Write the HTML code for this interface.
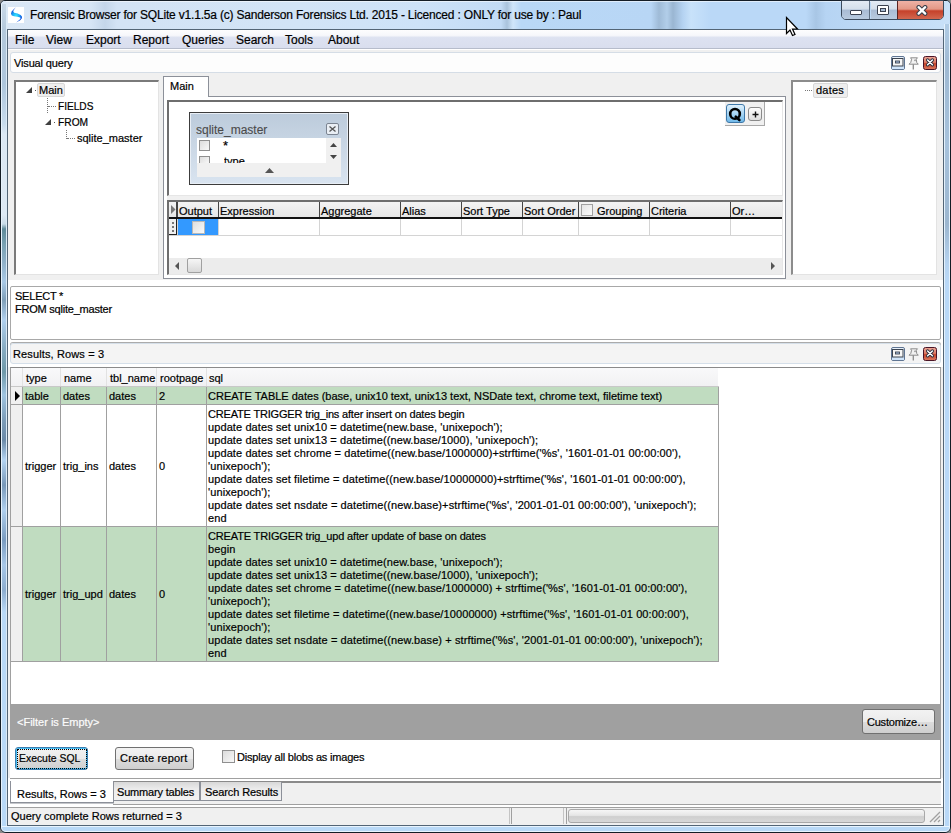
<!DOCTYPE html>
<html><head><meta charset="utf-8">
<style>
*{margin:0;padding:0;box-sizing:border-box}
html,body{width:951px;height:833px;overflow:hidden;background:#8a8a8a}
body{position:relative;font-family:"Liberation Sans",sans-serif;font-size:11px;color:#000}
.a{position:absolute}
.t{position:absolute;white-space:pre;line-height:13px;-webkit-text-stroke:0.2px currentColor}
#frame{left:0;top:0;width:951px;height:833px;border-radius:5px 5px 6px 6px;background:#b9d7f4;border:1px solid #141d26}
#glass{left:1px;top:1px;width:949px;height:28px;border-radius:4px 4px 0 0;background:linear-gradient(90deg,#dbe8f6 0px,#d6e5f5 90px,#c4d6ea 104px,#d3e3f5 116px,#d2e4f6 300px,#cde2f8 420px,#c2dbf5 500px,#a9c3dc 506px,#d0e6fa 512px,#b9d8f6 520px,#b8d6f5 650px,#9fbbd7 658px,#b2cee9 666px,#9ab6d2 672px,#b5d3f2 682px,#c8e2fa 690px,#bad8f7 710px,#bad8f7 805px,#a8c6e5 815px,#b6d4f3 825px,#c9e1f8 949px)}
#client{left:7px;top:29px;width:937px;height:797px;border:1px solid #536576;background:#f0f0f0}
#menubar{left:8px;top:30px;width:935px;height:19px;background:linear-gradient(#fdfdfe 0,#f6f7fb 30%,#dde2f1 42%,#d9deee 100%);border-bottom:1px solid #b6bccb;box-shadow:0 1px 0 #fff}
.menu{font-size:12px;top:34px;line-height:13px}
</style></head><body>
<div id="frame" class="a"></div>
<div id="glass" class="a"></div>
<div class="a" style="left:6px;top:1px;width:939px;height:1px;background:rgba(255,255,255,0.55)"></div>
<!-- title icon -->
<div class="a" style="left:8px;top:7px;width:16px;height:16px;background:#fff"></div>
<svg class="a" style="left:8px;top:7px" width="16" height="16" viewBox="0 0 16 16">
 <defs><radialGradient id="ig" cx="8" cy="8.5" r="6" gradientUnits="userSpaceOnUse"><stop offset="0" stop-color="#36e6ff"/><stop offset="0.55" stop-color="#1aa8f4"/><stop offset="1" stop-color="#0b4ee0"/></radialGradient></defs>
 <path d="M7.8 0.3 L5.5 2.5 L3.6 4.6 L3 6.8 L3.8 8.4 L6 9.2 L9.5 9.8 L12.2 10.4 L12.6 11.2 L11.5 12.8 L8.2 15.6 L12.2 13.2 L13.9 11.2 L13.9 9.6 L12.6 8 L9.6 6.6 L6.2 5.8 L5.3 4.6 L5.6 3.2 Z" fill="url(#ig)"/>
</svg>
<div class="t" style="left:30px;top:9px;font-size:12px;letter-spacing:-0.19px;line-height:13px">Forensic Browser for SQLite v1.1.5a (c) Sanderson Forensics Ltd. 2015 - Licenced : ONLY for use by : Paul</div>
<!-- caption buttons -->
<div class="a" style="left:841px;top:0px;width:103px;height:20px;border:1px solid #3b4a5c;border-radius:0 0 5px 5px;overflow:hidden">
 <div class="a" style="left:0;top:0;width:28px;height:18px;background:linear-gradient(#e3ebf4 0,#d4dfeb 45%,#a9bcd4 50%,#b8cadf 100%);border-right:1px solid #5f6f82"></div>
 <div class="a" style="left:29px;top:0;width:26px;height:18px;background:linear-gradient(#e3ebf4 0,#d4dfeb 45%,#a9bcd4 50%,#b8cadf 100%)"></div>
 <div class="a" style="left:55px;top:0;width:47px;height:18px;background:linear-gradient(#eeb2a6 0,#e39886 45%,#c6412a 55%,#d2674f 100%);border-left:1px solid #5a2320"></div>
 <div class="a" style="left:8px;top:9px;width:12px;height:5px;background:#fff;border:1px solid #3b4250;border-radius:1px"></div>
 <div class="a" style="left:35px;top:4px;width:12px;height:10px;background:#fff;border:1px solid #3b4250;border-radius:1px"><div class="a" style="left:2px;top:2px;width:6px;height:4px;background:#a9bcd4;border:1px solid #3b4250"></div></div>
 <svg class="a" style="left:74px;top:4px" width="12" height="11" viewBox="0 0 12 11"><path d="M2.6 2.2 L9.2 8.6 M9.2 2.2 L2.6 8.6" stroke="#3b3f4a" stroke-width="4.4" stroke-linecap="round"/><path d="M2.6 2.2 L9.2 8.6 M9.2 2.2 L2.6 8.6" stroke="#fff" stroke-width="2.3" stroke-linecap="round"/></svg>
</div>
<div id="client" class="a"></div>
<!-- left frame -->
<div class="a" style="left:1px;top:4px;width:6px;height:823px;background:#e6f2fc"></div>
<div class="a" style="left:2px;top:4px;width:4px;height:823px;background:linear-gradient(#c9d9e8 0px,#b4c9dc 26px,#aec6dc 80px,#c8dbec 120px,#dbe8f4 130px,#dde9f4 211px,#c9dbe8 220px,#5f8a9a 225px,#7aa2b4 241px,#8fb0c8 258px,#a9c9e6 278px,#7f9fb8 296px,#b0d0ee 316px,#86aac0 346px,#6e98a8 368px,#a0c4e0 391px,#7c9cb8 416px,#6b8aa8 436px,#b4d4f2 456px,#7898b8 481px,#b0d0ee 506px,#7a9cc0 536px,#a8c8e8 561px,#8cacce 586px,#b9d9f7 608px,#b9d9f7 823px)"></div>
<div class="a" style="left:6px;top:4px;width:1px;height:823px;background:#dbeaf6"></div>
<!-- right frame -->
<div class="a" style="left:944px;top:24px;width:6px;height:803px;background:#e4f1fc"></div>
<div class="a" style="left:945px;top:24px;width:4px;height:803px;background:linear-gradient(#b2cde6 0,#9fb9d2 40px,#a7c2dc 120px,#9cb6cf 200px,#b6d3f0 240px,#b9d8f7 260px,#b9d8f7 803px)"></div>
<!-- bottom frame -->
<div class="a" style="left:1px;top:826px;width:949px;height:6px;background:#e8f4fe;border-radius:0 0 5px 5px"></div>
<div class="a" style="left:2px;top:827px;width:947px;height:4px;background:#b9d9f7;border-radius:0 0 4px 4px"></div>
<div id="menubar" class="a"></div>
<div class="t menu" style="left:15px">File</div>
<div class="t menu" style="left:46px">View</div>
<div class="t menu" style="left:86px">Export</div>
<div class="t menu" style="left:133px">Report</div>
<div class="t menu" style="left:182px">Queries</div>
<div class="t menu" style="left:236px">Search</div>
<div class="t menu" style="left:285px">Tools</div>
<div class="t menu" style="left:328px">About</div>

<!-- Visual query header -->
<div class="a" style="left:10px;top:52px;width:931px;height:21px;background:#fdfdfd;border:1px solid #d5dde6;border-radius:3px"></div>
<div class="t" style="left:14px;top:57px;letter-spacing:-0.15px">Visual query</div>
<!-- header icons -->
<svg class="a" style="left:891px;top:56px" width="14" height="14" viewBox="0 0 14 14"><rect x="0.5" y="0.5" width="13" height="13" rx="1.5" fill="#e8f0f9" stroke="#5f7593"/><rect x="1" y="10" width="12" height="3" fill="#cfe4fa"/><rect x="1.5" y="2.5" width="10.5" height="7.5" fill="#f6f6f6" stroke="#3c4450"/><rect x="4.5" y="5" width="4" height="2" fill="#a9c4e6" stroke="#3c4450" stroke-width="0.9"/></svg>
<svg class="a" style="left:908px;top:57px" width="11" height="13" viewBox="0 0 11 13"><path d="M2.5 0.8 H9.5 L8.2 2.2 L8.8 5.6 L10.3 7.2 H1 L2.8 5.4 L3.6 2.2 Z" fill="#f2f2f2" stroke="#8c8c8c" stroke-width="1"/><circle cx="7" cy="3.3" r="0.9" fill="#9a9a9a"/><path d="M5.3 7.2 V12.5" stroke="#8c8c8c" stroke-width="1.3"/></svg>
<svg class="a" style="left:923px;top:56px" width="14" height="14" viewBox="0 0 14 14"><defs><linearGradient id="cg56" x1="0" y1="0" x2="0" y2="1"><stop offset="0" stop-color="#eba697"/><stop offset="0.45" stop-color="#dc7a64"/><stop offset="0.55" stop-color="#c4432a"/><stop offset="1" stop-color="#dd7a60"/></linearGradient></defs><rect x="0.5" y="0.5" width="13" height="13" rx="2" fill="url(#cg56)" stroke="#4a1426"/><path d="M4.6 4 L9.4 8.8 M9.4 4 L4.6 8.8" stroke="#2b3140" stroke-width="3.2" stroke-linecap="round"/><path d="M4.6 4 L9.4 8.8 M9.4 4 L4.6 8.8" stroke="#fff" stroke-width="1.4" stroke-linecap="round"/></svg>

<!-- left tree -->
<div class="a" style="left:14px;top:80px;width:145px;height:195px;background:#fff;border-top:2px solid #7a7a7a;border-left:2px solid #7a7a7a;border-right:1px solid #e3e3e3;border-bottom:1px solid #e3e3e3"></div>
<svg class="a" style="left:26px;top:87px" width="7" height="6"><path d="M6 0 V6 H0 Z" fill="#404040"/></svg>
<div class="a" style="left:35px;top:90px;width:1px;height:1px;background:#555"></div>
<div class="a" style="left:37px;top:83px;width:28px;height:14px;background:#eeeeee;border:1px solid #d8d8d8;border-radius:2px"></div>
<div class="t" style="left:39px;top:84px">Main</div>
<div class="a" style="left:47px;top:98px;width:1px;height:15px;border-left:1px dotted #777"></div>
<div class="a" style="left:48px;top:106px;width:8px;height:1px;border-top:1px dotted #777"></div>
<div class="t" style="left:58px;top:100px;transform:scaleX(0.92);transform-origin:0 0">FIELDS</div>
<svg class="a" style="left:45px;top:119px" width="7" height="6"><path d="M6 0 V6 H0 Z" fill="#404040"/></svg>
<div class="a" style="left:54px;top:122px;width:1px;height:1px;background:#555"></div>
<div class="t" style="left:58px;top:116px;transform:scaleX(0.93);transform-origin:0 0">FROM</div>
<div class="a" style="left:66px;top:130px;width:1px;height:9px;border-left:1px dotted #777"></div>
<div class="a" style="left:67px;top:138px;width:8px;height:1px;border-top:1px dotted #777"></div>
<div class="t" style="left:77px;top:132px">sqlite_master</div>

<!-- tab control -->
<div class="a" style="left:163px;top:96px;width:623px;height:183px;background:#fff;border:1px solid #8c9099"></div>
<div class="a" style="left:163px;top:76px;width:46px;height:21px;background:#fff;border:1px solid #8c9099;border-bottom:none"></div>
<div class="t" style="left:170px;top:80px">Main</div>
<!-- canvas -->
<div class="a" style="left:167px;top:100px;width:616px;height:96px;background:#fff;border-top:2px solid #6e6e6e;border-left:2px solid #6e6e6e;border-right:1px solid #e6e6e6;border-bottom:1px solid #e6e6e6"></div>
<div class="a" style="left:167px;top:196px;width:616px;height:4px;background:#f0f0f0"></div>
<!-- table box -->
<div class="a" style="left:189px;top:112px;width:160px;height:73px;border:1px solid #3c3c3c;background:linear-gradient(#bccbdb,#d9e4f0)"></div>
<div class="a" style="left:190px;top:113px;width:158px;height:71px;border:1px solid #e8eef5"></div>
<div class="t" style="left:196px;top:124px;color:#4a4a4a;font-size:12px;-webkit-text-stroke:0.1px #4a4a4a">sqlite_master</div>
<div class="a" style="left:326px;top:123px;width:13px;height:12px;border:1px solid #7b8491;border-radius:2px;background:#e9eef4"></div>
<svg class="a" style="left:329px;top:126px" width="7" height="6"><path d="M0.5 0.5 L6.5 5.5 M6.5 0.5 L0.5 5.5" stroke="#555" stroke-width="1.3"/></svg>
<div class="a" style="left:197px;top:138px;width:144px;height:25px;background:#fff"></div>
<div class="a" style="left:326px;top:138px;width:15px;height:25px;background:#f0f0f0"></div>
<svg class="a" style="left:330px;top:143px" width="7" height="4"><path d="M0 4 L3.5 0 L7 4Z" fill="#444"/></svg>
<svg class="a" style="left:330px;top:155px" width="7" height="4"><path d="M0 0 L3.5 4 L7 0Z" fill="#444"/></svg>
<div class="a" style="left:199px;top:140px;width:11px;height:11px;border:1px solid #8f8f8f;background:linear-gradient(135deg,#dcdcdc,#f8f8f8)"></div>
<div class="a" style="left:199px;top:156px;width:11px;height:7px;border:1px solid #8f8f8f;border-bottom:none;background:linear-gradient(135deg,#dcdcdc,#f8f8f8)"></div>
<div class="t" style="left:223px;top:139px;font-size:13px">*</div>
<div class="a" style="left:224px;top:154px;width:30px;height:9px;overflow:hidden"><div class="t" style="left:0;top:1px">type</div></div>
<div class="a" style="left:197px;top:163px;width:144px;height:14px;background:#f0f0f0"></div>
<svg class="a" style="left:265px;top:168px" width="9" height="5"><path d="M0 5 L4.5 0 L9 5Z" fill="#555"/></svg>
<!-- Q toolbar -->
<div class="a" style="left:725px;top:102px;width:40px;height:24px;background:#f0f0f0;border-right:1px solid #a8a8a8;border-bottom:1px solid #a8a8a8"></div>
<div class="a" style="left:726px;top:104px;width:19px;height:19px;border:1px solid #3d77a8;border-radius:3px;background:linear-gradient(#dff0fb,#a9d6f4 50%,#70b8e8)"></div>
<svg class="a" style="left:727px;top:107px" width="16" height="16" viewBox="0 0 16 16"><ellipse cx="8" cy="6.9" rx="4.8" ry="4.9" fill="none" stroke="#000" stroke-width="2.6"/><path d="M8.8 9.6 L12.4 13" stroke="#000" stroke-width="2.6" stroke-linecap="round"/></svg>
<div class="a" style="left:748px;top:107px;width:14px;height:14px;border:1px solid #8a8a8a;border-radius:3px;background:linear-gradient(#fdfdfd,#dedede)"></div>
<svg class="a" style="left:752px;top:111px" width="7" height="7"><path d="M0.5 3.5 H6.5 M3.5 0.5 V6.5" stroke="#111" stroke-width="1.4"/></svg>

<!-- visual grid -->
<div class="a" style="left:167px;top:200px;width:616px;height:75px;background:#fff;border-top:2px solid #6e6e6e;border-left:2px solid #6e6e6e;border-right:1px solid #e6e6e6;border-bottom:1px solid #e6e6e6"></div>
<div class="a" style="left:169px;top:202px;width:613px;height:15px;background:linear-gradient(#f3f3f3,#e6e6e6)"></div>
<div class="a" style="left:169px;top:217px;width:613px;height:2px;background:#111"></div>
<div class="a" style="left:169px;top:235px;width:613px;height:1px;background:#d4d4d4"></div>
<div class="a" style="left:177px;top:202px;width:1px;height:15px;background:#444"></div>
<div class="a" style="left:177px;top:219px;width:1px;height:16px;background:#d4d4d4"></div>
<div class="t" style="left:179px;top:205px">Output</div>
<div class="a" style="left:218px;top:202px;width:1px;height:15px;background:#444"></div>
<div class="a" style="left:218px;top:219px;width:1px;height:16px;background:#d4d4d4"></div>
<div class="t" style="left:220px;top:205px">Expression</div>
<div class="a" style="left:319px;top:202px;width:1px;height:15px;background:#444"></div>
<div class="a" style="left:319px;top:219px;width:1px;height:16px;background:#d4d4d4"></div>
<div class="t" style="left:321px;top:205px">Aggregate</div>
<div class="a" style="left:400px;top:202px;width:1px;height:15px;background:#444"></div>
<div class="a" style="left:400px;top:219px;width:1px;height:16px;background:#d4d4d4"></div>
<div class="t" style="left:402px;top:205px">Alias</div>
<div class="a" style="left:461px;top:202px;width:1px;height:15px;background:#444"></div>
<div class="a" style="left:461px;top:219px;width:1px;height:16px;background:#d4d4d4"></div>
<div class="t" style="left:463px;top:205px">Sort Type</div>
<div class="a" style="left:522px;top:202px;width:1px;height:15px;background:#444"></div>
<div class="a" style="left:522px;top:219px;width:1px;height:16px;background:#d4d4d4"></div>
<div class="t" style="left:524px;top:205px">Sort Order</div>
<div class="a" style="left:578px;top:202px;width:1px;height:15px;background:#444"></div>
<div class="a" style="left:578px;top:219px;width:1px;height:16px;background:#d4d4d4"></div>
<div class="a" style="left:581px;top:204px;width:12px;height:12px;border:1px solid #a0a0a0;background:linear-gradient(135deg,#e4e4e4,#fafafa)"></div>
<div class="t" style="left:597px;top:205px">Grouping</div>
<div class="a" style="left:649px;top:202px;width:1px;height:15px;background:#444"></div>
<div class="a" style="left:649px;top:219px;width:1px;height:16px;background:#d4d4d4"></div>
<div class="t" style="left:651px;top:205px">Criteria</div>
<div class="a" style="left:730px;top:202px;width:1px;height:15px;background:#444"></div>
<div class="a" style="left:730px;top:219px;width:1px;height:16px;background:#d4d4d4"></div>
<div class="t" style="left:732px;top:205px">Or…</div>
<div class="a" style="left:169px;top:202px;width:8px;height:15px;background:linear-gradient(#f3f3f3,#e6e6e6);border-right:1px solid #444"></div>
<svg class="a" style="left:171px;top:205px" width="5" height="9"><path d="M0 0 L4.5 4.5 L0 9Z" fill="#777"/></svg>
<div class="a" style="left:169px;top:219px;width:8px;height:16px;background:#f0f0f0;border-right:1px solid #222;border-bottom:1px solid #222"></div>
<div class="a" style="left:172px;top:222px;width:2px;height:2px;background:#777"></div><div class="a" style="left:172px;top:226px;width:2px;height:2px;background:#777"></div><div class="a" style="left:172px;top:230px;width:2px;height:2px;background:#777"></div>
<div class="a" style="left:178px;top:219px;width:40px;height:16px;background:#3399ff"></div>
<div class="a" style="left:192px;top:221px;width:13px;height:13px;background:linear-gradient(135deg,#dedede,#fafafa);border:1px solid #b8b8b8"></div>
<!-- h scrollbar -->
<div class="a" style="left:169px;top:258px;width:613px;height:16px;background:#ececec"></div>
<svg class="a" style="left:175px;top:262px" width="4" height="8"><path d="M4 0 L0 4 L4 8Z" fill="#555"/></svg>
<div class="a" style="left:187px;top:258px;width:15px;height:15px;border:1px solid #a0a0a0;border-radius:2px;background:linear-gradient(#f6f6f6,#d9d9d9)"></div>
<svg class="a" style="left:771px;top:262px" width="4" height="8"><path d="M0 0 L4 4 L0 8Z" fill="#555"/></svg>

<!-- right tree -->
<div class="a" style="left:791px;top:80px;width:146px;height:195px;background:#fff;border-top:2px solid #8c8c8c;border-left:2px solid #8c8c8c;border-right:1px solid #e3e3e3;border-bottom:1px solid #e3e3e3"></div>
<div class="a" style="left:805px;top:90px;width:9px;height:1px;border-top:1px dotted #777"></div>
<div class="a" style="left:813px;top:83px;width:35px;height:15px;background:#eeeeee;border:1px solid #d8d8d8;border-radius:2px"></div>
<div class="t" style="left:816px;top:84px;letter-spacing:0.2px">dates</div>

<!-- SQL memo -->
<div class="a" style="left:8px;top:280px;width:935px;height:87px;background:#fff"></div>
<div class="a" style="left:10px;top:286px;width:931px;height:54px;background:#fff;border:1px solid #a8a8a8;border-radius:2px"></div>
<div class="t" style="left:15px;top:290px;letter-spacing:-0.22px">SELECT *
FROM sqlite_master</div>
<div class="a" style="left:10px;top:342px;width:931px;height:4px;border:1px solid #ababab;border-bottom:none;border-radius:3px 3px 0 0"></div>

<!-- Results header -->
<div class="a" style="left:10px;top:343px;width:931px;height:21px;background:#f4f4f4;border:1px solid #d5dfe9;border-radius:3px"></div>
<div class="t" style="left:13px;top:348px;letter-spacing:0.13px">Results, Rows = 3</div>
<svg class="a" style="left:891px;top:347px" width="14" height="14" viewBox="0 0 14 14"><rect x="0.5" y="0.5" width="13" height="13" rx="1.5" fill="#e8f0f9" stroke="#5f7593"/><rect x="1" y="10" width="12" height="3" fill="#cfe4fa"/><rect x="1.5" y="2.5" width="10.5" height="7.5" fill="#f6f6f6" stroke="#3c4450"/><rect x="4.5" y="5" width="4" height="2" fill="#a9c4e6" stroke="#3c4450" stroke-width="0.9"/></svg>
<svg class="a" style="left:908px;top:348px" width="11" height="13" viewBox="0 0 11 13"><path d="M2.5 0.8 H9.5 L8.2 2.2 L8.8 5.6 L10.3 7.2 H1 L2.8 5.4 L3.6 2.2 Z" fill="#f2f2f2" stroke="#8c8c8c" stroke-width="1"/><circle cx="7" cy="3.3" r="0.9" fill="#9a9a9a"/><path d="M5.3 7.2 V12.5" stroke="#8c8c8c" stroke-width="1.3"/></svg>
<svg class="a" style="left:923px;top:347px" width="14" height="14" viewBox="0 0 14 14"><defs><linearGradient id="cg347" x1="0" y1="0" x2="0" y2="1"><stop offset="0" stop-color="#eba697"/><stop offset="0.45" stop-color="#dc7a64"/><stop offset="0.55" stop-color="#c4432a"/><stop offset="1" stop-color="#dd7a60"/></linearGradient></defs><rect x="0.5" y="0.5" width="13" height="13" rx="2" fill="url(#cg347)" stroke="#4a1426"/><path d="M4.6 4 L9.4 8.8 M9.4 4 L4.6 8.8" stroke="#2b3140" stroke-width="3.2" stroke-linecap="round"/><path d="M4.6 4 L9.4 8.8 M9.4 4 L4.6 8.8" stroke="#fff" stroke-width="1.4" stroke-linecap="round"/></svg>

<!-- results grid -->
<div class="a" style="left:10px;top:367px;width:931px;height:372px;background:#fff;border-left:1px solid #a0a0a0;border-right:1px solid #a0a0a0;border-top:1px solid #8a8a8a"></div>
<div class="a" style="left:11px;top:368px;width:707px;height:18px;background:linear-gradient(#f9f9fa,#f1f1f3)"></div>
<div class="a" style="left:11px;top:386px;width:708px;height:1px;background:#c8c8c8"></div>
<div class="a" style="left:11px;top:387px;width:11px;height:275px;background:#f0f0f0"></div>
<!-- row bgs -->
<div class="a" style="left:23px;top:387px;width:695px;height:17px;background:#c0dcc0"></div>
<div class="a" style="left:23px;top:405px;width:695px;height:121px;background:#fff"></div>
<div class="a" style="left:23px;top:527px;width:695px;height:134px;background:#c0dcc0"></div>
<!-- row lines -->
<div class="a" style="left:11px;top:404px;width:708px;height:1px;background:#a0a0a0"></div>
<div class="a" style="left:11px;top:526px;width:708px;height:1px;background:#a0a0a0"></div>
<div class="a" style="left:11px;top:661px;width:708px;height:1px;background:#a0a0a0"></div>
<div class="a" style="left:22px;top:368px;width:1px;height:18px;background:#e2e2e2"></div>
<div class="a" style="left:22px;top:387px;width:1px;height:275px;background:#a0a0a0"></div>
<div class="a" style="left:60px;top:368px;width:1px;height:18px;background:#e2e2e2"></div>
<div class="a" style="left:60px;top:387px;width:1px;height:275px;background:#a0a0a0"></div>
<div class="a" style="left:106px;top:368px;width:1px;height:18px;background:#e2e2e2"></div>
<div class="a" style="left:106px;top:387px;width:1px;height:275px;background:#a0a0a0"></div>
<div class="a" style="left:156px;top:368px;width:1px;height:18px;background:#e2e2e2"></div>
<div class="a" style="left:156px;top:387px;width:1px;height:275px;background:#a0a0a0"></div>
<div class="a" style="left:206px;top:368px;width:1px;height:18px;background:#e2e2e2"></div>
<div class="a" style="left:206px;top:387px;width:1px;height:275px;background:#a0a0a0"></div>
<div class="a" style="left:718px;top:387px;width:1px;height:275px;background:#a0a0a0"></div>
<div class="t" style="left:26px;top:372px">type</div>
<div class="t" style="left:64px;top:372px">name</div>
<div class="t" style="left:110px;top:372px">tbl_name</div>
<div class="t" style="left:160px;top:372px">rootpage</div>
<div class="t" style="left:209px;top:372px">sql</div>
<svg class="a" style="left:15px;top:391px" width="5" height="10"><path d="M0 0 L5 5 L0 10Z" fill="#000"/></svg>
<div class="t" style="left:25px;top:390px">table</div>
<div class="t" style="left:63px;top:390px">dates</div>
<div class="t" style="left:109px;top:390px">dates</div>
<div class="t" style="left:159px;top:390px">2</div>
<div class="t" style="left:208px;top:390px">CREATE TABLE dates (base, unix10 text, unix13 text, NSDate text, chrome text, filetime text)</div>
<div class="t" style="left:25px;top:460px">trigger</div>
<div class="t" style="left:63px;top:460px">trig_ins</div>
<div class="t" style="left:109px;top:460px">dates</div>
<div class="t" style="left:159px;top:460px">0</div>
<div class="t" style="left:208px;top:408px;letter-spacing:-0.18px">CREATE TRIGGER trig_ins after insert on dates begin</div>
<div class="t" style="left:208px;top:421px;letter-spacing:0.1px">update dates set unix10 = datetime(new.base, 'unixepoch');
update dates set unix13 = datetime((new.base/1000), 'unixepoch');
update dates set chrome = datetime((new.base/1000000)+strftime('%s', '1601-01-01 00:00:00'),
'unixepoch');
update dates set filetime = datetime((new.base/10000000)+strftime('%s', '1601-01-01 00:00:00'),
'unixepoch');
update dates set nsdate = datetime((new.base)+strftime('%s', '2001-01-01 00:00:00'), 'unixepoch');
end</div>
<div class="t" style="left:25px;top:588px">trigger</div>
<div class="t" style="left:63px;top:588px">trig_upd</div>
<div class="t" style="left:109px;top:588px">dates</div>
<div class="t" style="left:159px;top:588px">0</div>
<div class="t" style="left:208px;top:530px;letter-spacing:-0.15px">CREATE TRIGGER trig_upd after update of base on dates</div>
<div class="t" style="left:208px;top:543px;letter-spacing:0.1px">begin
update dates set unix10 = datetime(new.base, 'unixepoch');
update dates set unix13 = datetime((new.base/1000), 'unixepoch');
update dates set chrome = datetime((new.base/1000000) + strftime('%s', '1601-01-01 00:00:00'),
'unixepoch');
update dates set filetime = datetime((new.base/10000000) +strftime('%s', '1601-01-01 00:00:00'),
'unixepoch');
update dates set nsdate = datetime((new.base) + strftime('%s', '2001-01-01 00:00:00'), 'unixepoch');
end</div>

<!-- filter bar -->
<div class="a" style="left:10px;top:704px;width:931px;height:36px;background:#a0a0a0"></div>
<div class="t" style="left:17px;top:716px;color:#fcfcfc">&lt;Filter is Empty&gt;</div>
<div class="a" style="left:862px;top:709px;width:73px;height:25px;border:1px solid #707070;border-radius:3px;background:linear-gradient(#f2f2f2 0,#ebebeb 50%,#dddddd 50%,#cfcfcf 100%)"></div>
<div class="t" style="left:867px;top:716px;letter-spacing:-0.22px">Customize…</div>

<!-- buttons -->
<div class="a" style="left:10px;top:740px;width:931px;height:38px;background:#fff;border-right:1px solid #a0a0a0"></div>
<div class="a" style="left:15px;top:747px;width:73px;height:23px;border:1px solid #3c7fb1;border-radius:3px;background:linear-gradient(#f2f2f2 0,#ebebeb 50%,#dddddd 50%,#cfcfcf 100%);box-shadow:inset 0 0 0 1px #48c0f5"></div>
<div class="a" style="left:17px;top:749px;width:70px;height:20px;border:1px dotted #000"></div>
<div class="t" style="left:19px;top:752px;transform:scaleX(0.945);transform-origin:0 0">Execute SQL</div>
<div class="a" style="left:115px;top:747px;width:79px;height:23px;border:1px solid #707070;border-radius:3px;background:linear-gradient(#f2f2f2 0,#ebebeb 50%,#dddddd 50%,#cfcfcf 100%)"></div>
<div class="t" style="left:120px;top:752px;letter-spacing:0.2px">Create report</div>
<div class="a" style="left:222px;top:750px;width:13px;height:13px;border:1px solid #8f8f8f;background:linear-gradient(135deg,#dcdcdc,#f8f8f8)"></div>
<div class="t" style="left:237px;top:751px;letter-spacing:-0.2px">Display all blobs as images</div>

<!-- separator & bottom tabs -->
<div class="a" style="left:8px;top:778px;width:935px;height:29px;background:#fff"></div>
<div class="a" style="left:10px;top:778px;width:931px;height:1px;background:#a0a0a0"></div>
<div class="a" style="left:113px;top:781px;width:828px;height:24px;background:#f0f0f0;border-top:2px solid #8a8a8a;border-bottom:1px solid #a0a0a0"></div>
<div class="a" style="left:113px;top:782px;width:87px;height:19px;background:linear-gradient(#d8d8d8,#ececec 40%,#f2f2f2);border:1px solid #8c9099;border-top:none"></div>
<div class="t" style="left:117px;top:786px;letter-spacing:-0.18px">Summary tables</div>
<div class="a" style="left:200px;top:782px;width:82px;height:19px;background:linear-gradient(#d8d8d8,#ececec 40%,#f2f2f2);border:1px solid #8c9099;border-top:none"></div>
<div class="t" style="left:205px;top:786px;letter-spacing:-0.1px">Search Results</div>
<div class="a" style="left:10px;top:781px;width:104px;height:22px;background:#fff;border:1px solid #8c9099;border-top:none;border-bottom:1px solid #8c9099;box-shadow:0 1px 0 #c4c6ca"></div>
<div class="t" style="left:17px;top:788px">Results, Rows = 3</div>

<!-- status bar -->
<div class="a" style="left:8px;top:807px;width:935px;height:1px;background:#a0a0a0"></div>
<div class="t" style="left:11px;top:810px">Query complete Rows returned = 3</div>
<div class="a" style="left:509px;top:808px;width:1px;height:16px;background:#c4c4c4"></div>
<div class="a" style="left:563px;top:808px;width:1px;height:16px;background:#c4c4c4"></div>
<div class="a" style="left:511px;top:807px;width:53px;height:17px;border-left:1px solid #a0a0a0;border-top:1px solid #a0a0a0"></div>
<div class="a" style="left:566px;top:807px;width:360px;height:17px;border-left:1px solid #a0a0a0;border-top:1px solid #a0a0a0"></div>
<div class="a" style="left:568px;top:809px;width:357px;height:14px;border:1px solid #a8a8a8;border-radius:3px;background:linear-gradient(#f6f6f6 0,#e6e6e6 45%,#cfcfcf 55%,#d8d8d8 100%)"></div>
<svg class="a" style="left:929px;top:811px" width="12" height="12"><path d="M11 1 L1 11 M11 5 L5 11 M11 9 L9 11" stroke="#a0a0a0" stroke-width="1.3"/></svg>

<!-- mouse cursor -->
<svg class="a" style="left:785px;top:16px" width="14" height="22" viewBox="0 0 14 22"><path d="M1.5 1.5 V17.5 L5 14 L7.5 19.5 L10 18.5 L7.5 13 H12.5 Z" fill="#fff" stroke="#000" stroke-width="1.2" stroke-linejoin="miter"/></svg>
</body></html>
